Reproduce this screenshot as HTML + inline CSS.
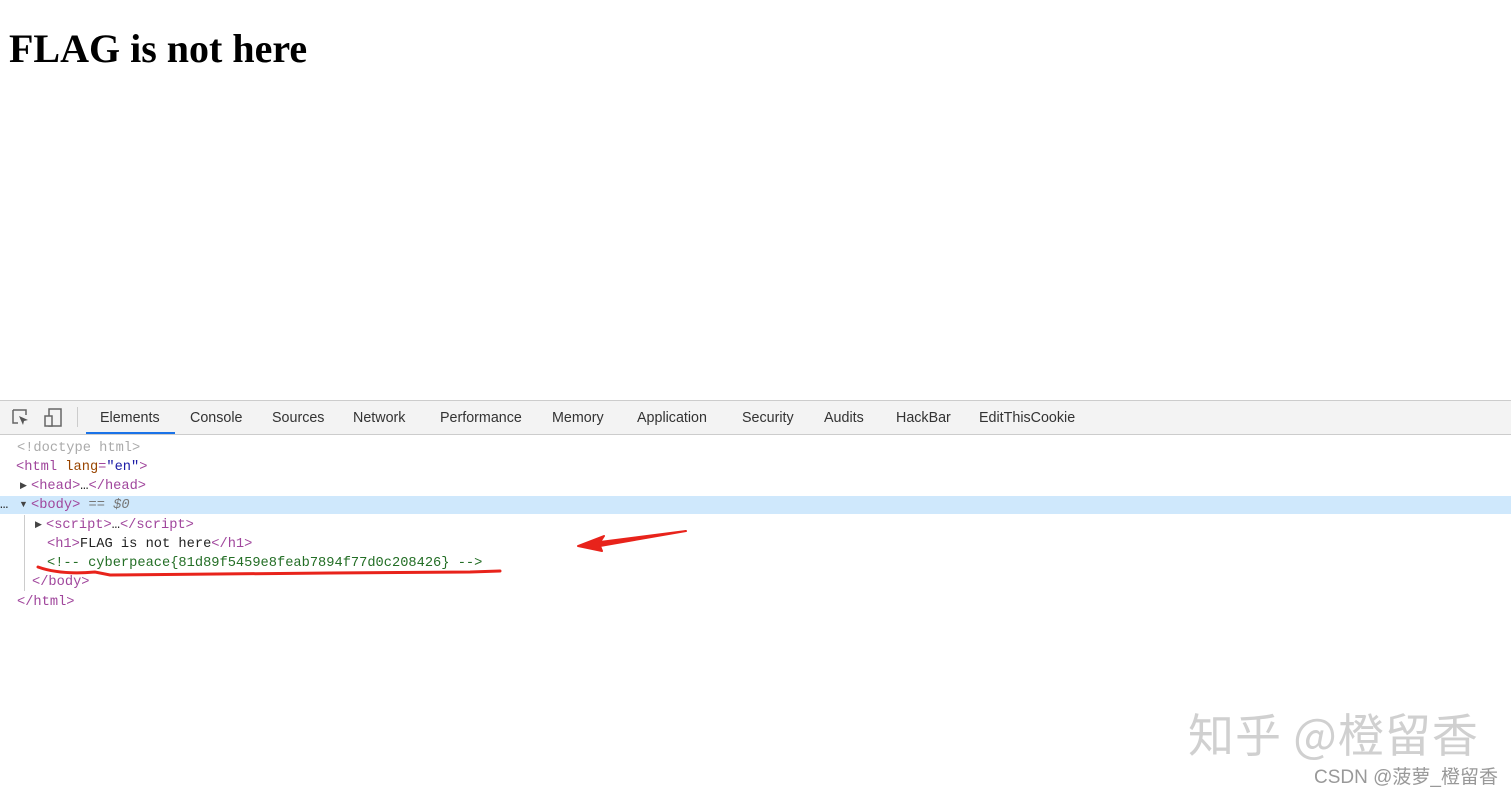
<!DOCTYPE html>
<html><head><meta charset="utf-8"><style>
body{margin:0;width:1511px;height:796px;background:#fff;position:relative;overflow:hidden;font-family:"Liberation Sans",sans-serif}
h1{position:absolute;left:9px;top:25px;margin:0;font:bold 40px "Liberation Serif",serif;color:#000;white-space:nowrap}
.bar{position:absolute;left:0;top:400px;width:1511px;height:33px;background:#f3f3f3;border-top:1px solid #ccc;border-bottom:1px solid #ccc}
.tab{position:absolute;top:9px;font-size:14.3px;color:#333;white-space:nowrap}
.sel{position:absolute;left:86px;top:31px;width:89px;height:2px;background:#1a73e8}
.l{position:absolute;font:13.7px "Liberation Mono",monospace;white-space:pre;line-height:19px}
.t{color:#a0469c}.a{color:#994500}.v{color:#1a1aa6}.g{color:#aaa}.c{color:#236e25}.k{color:#222}
.tri{position:absolute;font-size:9px;color:#444}
</style></head><body>
<h1>FLAG is not here</h1>
<div class="bar">
<svg style="position:absolute;left:11px;top:7px" width="20" height="20" viewBox="0 0 20 20"><path d="M2 2h13v5M2 2v13h5" fill="none" stroke="#666" stroke-width="1.5"/><path d="M8 8l9 4-4 1-1 4z" fill="#555"/></svg>
<svg style="position:absolute;left:43px;top:6px" width="22" height="22" viewBox="0 0 22 22"><rect x="6" y="2" width="12" height="17" fill="none" stroke="#666" stroke-width="1.5"/><rect x="2" y="9" width="7" height="10" fill="#f3f3f3" stroke="#666" stroke-width="1.5"/></svg>
<div style="position:absolute;left:77px;top:6px;width:1px;height:20px;background:#ccc"></div>
<span class="tab" style="left:100px">Elements</span>
<span class="tab" style="left:190px">Console</span>
<span class="tab" style="left:272px">Sources</span>
<span class="tab" style="left:353px">Network</span>
<span class="tab" style="left:440px">Performance</span>
<span class="tab" style="left:552px">Memory</span>
<span class="tab" style="left:637px">Application</span>
<span class="tab" style="left:742px">Security</span>
<span class="tab" style="left:824px">Audits</span>
<span class="tab" style="left:896px">HackBar</span>
<span class="tab" style="left:979px">EditThisCookie</span>
<div class="sel"></div>
</div>
<div style="position:absolute;left:0;top:496px;width:1511px;height:18px;background:#cfe8fc"></div>
<div style="position:absolute;left:24px;top:515px;width:1px;height:76px;background:#ccc"></div>
<div class="l g" style="left:17px;top:439px">&lt;!doctype html&gt;</div>
<div class="l" style="left:16px;top:458px"><span class="t">&lt;html</span> <span class="a">lang</span><span class="t">=</span><span class="v">"en"</span><span class="t">&gt;</span></div>
<span class="tri" style="left:20px;top:480px">▶</span>
<div class="l" style="left:31px;top:477px"><span class="t">&lt;head&gt;</span><span class="k">…</span><span class="t">&lt;/head&gt;</span></div>
<div class="l k" style="left:0;top:496px">…</div>
<span class="tri" style="left:19px;top:499px">▼</span>
<div class="l" style="left:31px;top:496px"><span class="t">&lt;body&gt;</span> <span style="color:#777">== <i>$0</i></span></div>
<span class="tri" style="left:35px;top:519px">▶</span>
<div class="l" style="left:46px;top:516px"><span class="t">&lt;script&gt;</span><span class="k">…</span><span class="t">&lt;/script&gt;</span></div>
<div class="l" style="left:47px;top:535px"><span class="t">&lt;h1&gt;</span><span class="k">FLAG is not here</span><span class="t">&lt;/h1&gt;</span></div>
<div class="l c" style="left:47px;top:554px">&lt;!-- cyberpeace{81d89f5459e8feab7894f77d0c208426} --&gt;</div>
<div class="l t" style="left:32px;top:573px">&lt;/body&gt;</div>
<div class="l t" style="left:17px;top:593px">&lt;/html&gt;</div>
<svg style="position:absolute;left:0;top:0" width="1511" height="796"><path d="M38 567 Q60 575 95 572 L110 575 L330 573 L470 572 L500 571" fill="none" stroke="#e8231b" stroke-width="3" stroke-linecap="round"/><path d="M686 531 L600 542 L604 536 L578 546 L602 551 L600 546 Z" fill="#e8231b" stroke="#e8231b" stroke-width="2" stroke-linejoin="round"/></svg>
<div style="position:absolute;left:1188px;top:700px;font:46px 'Noto Sans CJK SC',sans-serif;color:#d0d0d0;white-space:nowrap;letter-spacing:1px">知乎 @橙留香</div>
<div style="position:absolute;left:1314px;top:762px;font:19px 'Liberation Sans','Noto Sans CJK SC',sans-serif;color:#999;white-space:nowrap">CSDN @菠萝_橙留香</div>
</body></html>
